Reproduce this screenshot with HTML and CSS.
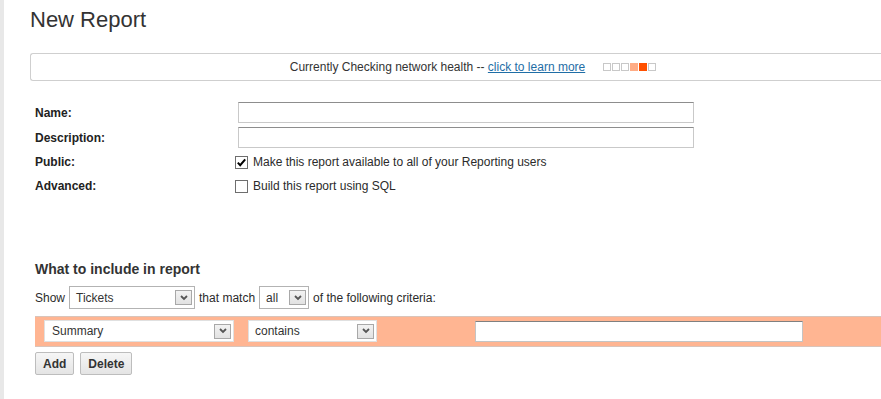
FILE: index.html
```html
<!DOCTYPE html>
<html>
<head>
<meta charset="utf-8">
<title>New Report</title>
<link rel="stylesheet" href="styles.css">
</head>
<body>
<div class="page">
  <h1 class="title">New Report</h1>

  <div class="notice">
    <span class="notice-text">Currently Checking network health -- <a href="#" class="notice-link">click to learn more</a></span>
    <span class="dots">
      <span class="dot"></span><span class="dot"></span><span class="dot"></span><span class="dot dot-light"></span><span class="dot dot-strong"></span><span class="dot"></span>
    </span>
  </div>

  <div class="form">
    <div class="label">Name:</div>
    <div class="field"><span class="text-input wide"></span></div>

    <div class="label">Description:</div>
    <div class="field"><span class="text-input wide"></span></div>

    <div class="label">Public:</div>
    <div class="field check-field">
      <span class="cb"><svg width="11" height="11" viewBox="0 0 11 11"><path d="M1.8 5.6 L4.2 8.2 L9.2 2.4" fill="none" stroke="#000" stroke-width="2"/></svg></span>
      <span class="cb-text">Make this report available to all of your Reporting users</span>
    </div>

    <div class="label">Advanced:</div>
    <div class="field check-field">
      <span class="cb"></span>
      <span class="cb-text">Build this report using SQL</span>
    </div>
  </div>

  <h2 class="section-title">What to include in report</h2>

  <div class="show-row">
    <span>Show</span>
    <span class="sel sel-tickets"><span class="sel-text">Tickets</span><span class="arrow"><svg width="8" height="6" viewBox="0 0 8 6"><path d="M1 1 L4 4 L7 1" fill="none" stroke="#555" stroke-width="1.8"/></svg></span></span>
    <span>that match</span>
    <span class="sel sel-all"><span class="sel-text">all</span><span class="arrow"><svg width="8" height="6" viewBox="0 0 8 6"><path d="M1 1 L4 4 L7 1" fill="none" stroke="#555" stroke-width="1.8"/></svg></span></span>
    <span>of the following criteria:</span>
  </div>

  <div class="criteria">
    <span class="sel sel-field"><span class="sel-text">Summary</span><span class="arrow"><svg width="8" height="6" viewBox="0 0 8 6"><path d="M1 1 L4 4 L7 1" fill="none" stroke="#555" stroke-width="1.8"/></svg></span></span>
    <span class="sel sel-op"><span class="sel-text">contains</span><span class="arrow"><svg width="8" height="6" viewBox="0 0 8 6"><path d="M1 1 L4 4 L7 1" fill="none" stroke="#555" stroke-width="1.8"/></svg></span></span>
    <span class="text-input value"></span>
  </div>

  <div class="buttons">
    <button class="btn">Add</button>
    <button class="btn">Delete</button>
  </div>
</div>
</body>
</html>
```

FILE: styles.css
```css
html, body {
  margin: 0;
  padding: 0;
  background: #fff;
}

body {
  font-family: "Liberation Sans", Arial, sans-serif;
  font-size: 12px;
  color: #2b2b2b;
}

.page {
  border-left: 4px solid #e8e8e8;
  padding-left: 26px;
  height: 399px;
  box-sizing: border-box;
  overflow: hidden;
}

.title {
  margin: 7px 0 20px 0;
  font-size: 22px;
  line-height: 26px;
  font-weight: normal;
  color: #333;
}

.notice {
  height: 28px;
  box-sizing: border-box;
  border: 1px solid #cfcfcf;
  border-right: none;
  border-radius: 3px 0 0 3px;
  padding-left: 34px;
  display: flex;
  align-items: center;
  justify-content: center;
  gap: 18px;
  color: #333;
}

.notice-text {
  line-height: 26px;
}

.notice-link {
  color: #1f6ea6;
  text-decoration: underline;
}

.dots {
  display: flex;
  gap: 1px;
}

.dot {
  width: 8px;
  height: 8px;
  box-sizing: border-box;
  border: 1px solid #c8c8c8;
  background: #fff;
}

.dot-light {
  background: #ffac85;
  border-color: #ffac85;
}

.dot-strong {
  background: #ff5000;
  border-color: #ff5000;
}

.form {
  margin-top: 21px;
  padding-left: 5px;
  display: grid;
  grid-template-columns: 203px 1fr;
  grid-template-rows: 21px 21px 20px 20px;
  row-gap: 4px;
}

.label {
  font-weight: bold;
  color: #222;
  display: flex;
  align-items: center;
}

.field {
  display: flex;
  align-items: center;
}

.text-input {
  display: block;
  box-sizing: border-box;
  height: 21px;
  background: #fff;
  border: 1px solid #c9c9c9;
  border-top-color: #8d8d8d;
}

.wide {
  width: 456px;
}

.check-field {
  margin-left: -3px;
  gap: 5px;
}

.cb {
  width: 13px;
  height: 13px;
  box-sizing: border-box;
  border: 1px solid #6e6e6e;
  background: #fff;
  display: flex;
  align-items: center;
  justify-content: center;
}

.cb-text {
  color: #2b2b2b;
}

.section-title {
  margin: 64px 0 0 5px;
  font-size: 14px;
  line-height: 18px;
  font-weight: bold;
  color: #333;
}

.show-row {
  margin: 8px 0 0 5px;
  height: 23px;
  display: flex;
  align-items: center;
  gap: 4px;
}

.sel {
  display: flex;
  align-items: center;
  justify-content: space-between;
  box-sizing: border-box;
  height: 23px;
  background: #fff;
  border: 1px solid #b3b3b3;
  padding: 0 2px 0 6px;
  color: #333;
}

.arrow {
  width: 17px;
  height: 15px;
  box-sizing: border-box;
  border: 1px solid #a8a8a8;
  background: linear-gradient(#f2f2f2, #e2e2e2);
  display: flex;
  align-items: center;
  justify-content: center;
}

.sel-tickets { width: 126px; }
.sel-all { width: 50px; }

.criteria {
  margin: 7px 0 0 5px;
  box-sizing: border-box;
  background: #ffb592;
  border-top: 1px solid #d9c4ba;
  border-bottom: 1px solid #d9c4ba;
  padding: 3px 0 4px 9px;
  display: flex;
  align-items: flex-start;
}

.criteria .sel {
  height: 22px;
  border-color: #e0e0e0;
}

.sel-field {
  width: 190px;
  padding-left: 7px;
}

.sel-op {
  width: 129px;
  margin-left: 14px;
}

.value {
  width: 328px;
  margin-left: 98px;
  margin-top: 1px;
  border-color: #c4c4c4;
  border-top-color: #808080;
}

.buttons {
  margin: 5px 0 0 5px;
  display: flex;
  gap: 6px;
}

.btn {
  height: 23px;
  padding: 0 7px;
  border: 1px solid #bdbdbd;
  border-radius: 2px;
  background: linear-gradient(#f6f6f6, #e4e4e4);
  font-family: "Liberation Sans", Arial, sans-serif;
  font-size: 12px;
  font-weight: bold;
  color: #333;
  cursor: pointer;
}
```
